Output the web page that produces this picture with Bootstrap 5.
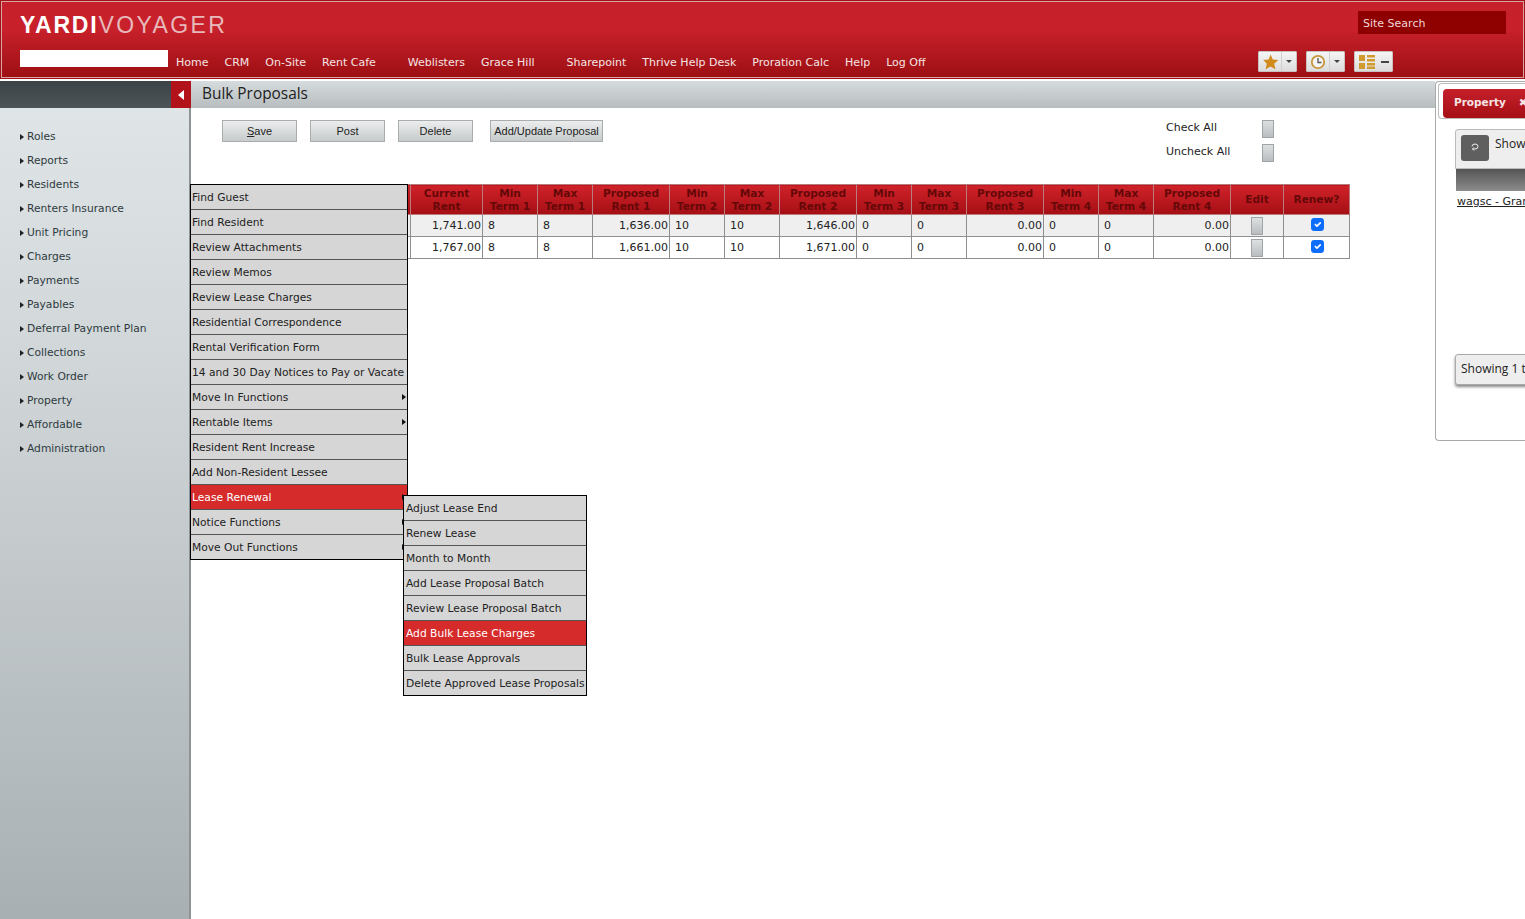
<!DOCTYPE html>
<html lang="en">
<head>
    <meta charset="UTF-8">
    <meta name="viewport" content="width=device-width, initial-scale=1">
    <title>Bulk Proposals</title>
    <link href="https://cdn.jsdelivr.net/npm/bootstrap@5.3.0/dist/css/bootstrap.min.css" rel="stylesheet">
    <style>
        html, body { height: 919px; overflow: hidden; }
        body { font-family: "DejaVu Sans", sans-serif; font-size: 11px; color: #222; background: #fff; position: relative; }

        .top-head { height: 79px; padding: 10px 18px 0 19px; background: linear-gradient(#c5202b 0%, #c9212c 35%, #9c0f12 100%); border: 1px solid #a01015; box-shadow: inset 0 0 0 1px #d8a6a6; }
        .brand-row { height: 39px; }
        .brand-text { font-family: "Liberation Sans", sans-serif; font-size: 23px; line-height: 28px; letter-spacing: 2.4px; color: #e7b9bb; }
        .brand-text b { color: #fff; letter-spacing: 1.8px; }
        .search-box { width: 148px; height: 23px; background: #8f0000; border: 0; border-radius: 0; color: #f3d5d5; font-size: 11px; padding: 1px 5px 0; box-shadow: none; }
        .search-box::placeholder { color: #f3d5d5; opacity: 1; }
        .search-box:focus { background: #8f0000; color: #f3d5d5; box-shadow: none; }
        .acct-box { width: 148px; height: 17px; background: #fff; margin-right: 8px; margin-bottom: 7px; }
        .nav-row { height: 23px; }
        .top-link { color: #f5e4e4; text-decoration: none; margin-right: 16px; margin-top: 4px; white-space: nowrap; }
        .top-tools { margin-right: 113px; margin-left: auto; gap: 9px; }
        .tool-btn { width: 39px; height: 21px; background: linear-gradient(#f5f5f5, #dcdcdc); border: 1px solid #c9c0c0; padding: 0; border-radius: 1px; }
        .tool-btn .part-a { width: 23px; height: 100%; border-right: 1px solid #cfcfcf; }
        .tool-btn .part-b { width: 14px; height: 100%; }
        .caret-mini { width: 0; height: 0; border-left: 3px solid transparent; border-right: 3px solid transparent; border-top: 3px solid #444; }
        .dash-mini { width: 8px; height: 2px; background: #444; }

        .work-area { height: 838px; margin-top: 2px; }
        .side-col { width: 191px; flex: none; background: linear-gradient(#e1e6e8 0%, #d0d6d8 35%, #a9b0b3 100%); box-shadow: inset -2px 0 0 #8e9496; }
        .side-head { height: 27px; background: linear-gradient(#3a4245, #4d5558); }
        .side-toggle { width: 20px; height: 27px; background: #b2121a; }
        .side-list { padding: 17px 0 0 20px; list-style: none; margin: 0; font-size: 10.7px; }
        .side-list li { height: 24px; line-height: 24px; color: #2e3a40; display: flex; align-items: center; white-space: nowrap; }
        .side-list li::before { content: ""; border-left: 4px solid #222; border-top: 3px solid transparent; border-bottom: 3px solid transparent; margin-right: 3px; }

        .main-col { flex: 1 1 auto; min-width: 0; }
        .title-strip { height: 27px; background: linear-gradient(#d6dbdd, #b7bdbf); font-family: "Open Sans", sans-serif; font-size: 15.4px; line-height: 26px; padding-left: 11px; color: #222; }
        .tool-strip { height: 76px; padding: 12px 161px 0 31px; }
        .grey-btn { height: 22px; width: 75px; padding: 0; font-family: "Liberation Sans", sans-serif; font-size: 11px; line-height: 20px; color: #222; background: linear-gradient(#eceeee, #c6cacb); border: 1px solid #a9adae; border-radius: 0; margin-right: 13px; white-space: nowrap; }
        .grey-btn.wide-btn { width: 113px; margin-left: 4px; }
        .check-pick { width: 108px; height: 24px; margin-top: -3px; }
        .check-pick + .check-pick { margin-top: 0; }
        .check-pick span { margin-bottom: 2px; }
        .mini-btn { width: 12px; height: 18px; background: linear-gradient(#dde0e1, #b9bdbf); border: 1px solid #a0a4a6; flex: none; }

        .rent-table { margin: 0 0 0 31px; width: 1127px; table-layout: fixed; border-collapse: collapse; }
        .rent-table th { background: linear-gradient(#d0222a, #a50f14); color: #650808; font-weight: 700; font-size: 10.6px; line-height: 13px; text-align: center; height: 30px; padding: 0; border: 1px solid #b87c7c; vertical-align: middle; white-space: nowrap; }
        .rent-table td { height: 22px; padding: 2px 1px 0 5px; font-size: 11px; border: 1px solid #8f8f8f; vertical-align: middle; }
        .rent-table tbody tr:nth-child(odd) td { background: #efefef; }
        .rent-table td.num { text-align: right; padding: 2px 1px 0 0; }
        .rent-table td.mid { text-align: center; padding: 0; }
        .rent-table .form-check-input { width: 13px; height: 13px; float: none; display: block; margin: 0 auto 2px; position: relative; left: 1px; }
        .rent-table .mini-btn { margin: 0 auto; }

        .dock-col { width: 90px; flex: none; height: 360px; overflow: hidden; border: 1px solid #aaa; border-right: 0; border-radius: 4px 0 0 4px; }
        .dock-head { height: 36px; margin: 1px 0 0 2px; padding: 5px 0 0 4px; border: 1px solid #bbb; border-right: 0; border-radius: 4px 0 0 4px; }
        .dock-tab { width: 100px; height: 29px; background: linear-gradient(#c5202b, #a50f14); border-radius: 4px 0 0 4px; color: #f5e4e4; font-weight: 700; font-size: 10.5px; line-height: 27px; padding-left: 11px; white-space: nowrap; }
        .dock-tab span { margin-left: 13px; }
        .show-box { width: 100px; height: 40px; margin: 10px 0 0 19px; background: #eee; border: 1px solid #bbb; border-radius: 3px 0 0 0; padding: 5px; font-family: "Open Sans", sans-serif; font-size: 12px; white-space: nowrap; }
        .spin-btn { width: 28px; height: 26px; background: #5f5f5f; border-radius: 3px; color: #eee; margin-right: 6px; flex: none; }
        .dark-bar { width: 100px; height: 22px; margin-left: 20px; background: linear-gradient(#555, #8b8b8b); }
        .dock-link { display: block; margin: 3px 0 0 21px; color: #222; white-space: nowrap; }
        .showing-box { width: 100px; height: 31px; margin: 143px 0 0 19px; background: #eee; border: 1px solid #aaa; border-radius: 3px 0 0 3px; box-shadow: 0 2px 3px #888; padding: 0 5px; line-height: 28px; font-family: "Open Sans", sans-serif; font-size: 12px; white-space: nowrap; }

        .fly-menu { display: block; padding: 0; margin: 0; border: 1px solid #000; border-radius: 0; background: #d6d6d6; min-width: 0; font-size: 10.7px; }
        .fly-main { left: 190px; top: 184px; width: 218px; z-index: 5; }
        .fly-sub { left: 403px; top: 495px; width: 184px; z-index: 6; }
        .fly-menu .dropdown-item { height: 25px; line-height: 26px; padding: 0 1px; color: #222; border-bottom: 1px solid #555; position: relative; white-space: nowrap; }
        .fly-sub .dropdown-item { padding-left: 2px; }
        .fly-menu li:last-child .dropdown-item { border-bottom: 0; height: 24px; }
        .fly-menu .dropdown-item.active { background: #d52b2b; color: #fff; }
        .fly-menu .has-kids::after { content: ""; position: absolute; right: 1px; top: 9px; border-left: 4px solid #111; border-top: 3px solid transparent; border-bottom: 3px solid transparent; }
    </style>
</head>
<body>

<header class="top-head">
    <div class="brand-row d-flex justify-content-between align-items-start">
        <div class="brand-text"><b>YARDI</b>VOYAGER</div>
        <input class="form-control search-box" type="text" placeholder="Site Search">
    </div>
    <div class="nav-row d-flex align-items-center">
        <div class="acct-box"></div>
        <a class="top-link" href="#">Home</a>
        <a class="top-link" href="#">CRM</a>
        <a class="top-link" href="#">On-Site</a>
        <a class="top-link" href="#">Rent Cafe</a>
        <a class="top-link ms-3" href="#">Weblisters</a>
        <a class="top-link" href="#">Grace Hill</a>
        <a class="top-link ms-3" href="#">Sharepoint</a>
        <a class="top-link" href="#">Thrive Help Desk</a>
        <a class="top-link" href="#">Proration Calc</a>
        <a class="top-link" href="#">Help</a>
        <a class="top-link" href="#">Log Off</a>
        <div class="top-tools d-flex">
            <div class="tool-btn d-flex">
                <div class="part-a d-flex align-items-center justify-content-center">
                    <svg width="17" height="16" viewBox="0 0 17 16"><path d="M8.5 0.5l2.3 5 5.5.6-4.1 3.7 1.2 5.4-4.9-2.8-4.9 2.8 1.2-5.4L1.2 6.100l5.500-.6z" fill="#d28a1a"/></svg>
                </div>
                <div class="part-b d-flex align-items-center justify-content-center"><div class="caret-mini"></div></div>
            </div>
            <div class="tool-btn d-flex">
                <div class="part-a d-flex align-items-center justify-content-center">
                    <svg width="16" height="16" viewBox="0 0 16 16"><circle cx="8" cy="8" r="6.200" fill="#f4f4f4" stroke="#c8963c" stroke-width="1.800"/><path d="M8 4v4.500h3.500" fill="none" stroke="#555" stroke-width="1.300"/></svg>
                </div>
                <div class="part-b d-flex align-items-center justify-content-center"><div class="caret-mini"></div></div>
            </div>
            <div class="tool-btn d-flex">
                <div class="part-a d-flex align-items-center justify-content-center border-0">
                    <svg width="16" height="14" viewBox="0 0 16 14"><g fill="#d19a2e"><rect x="0" y="0" width="6" height="6"/><rect x="0" y="8" width="6" height="6"/><rect x="8" y="0" width="8" height="2.500"/><rect x="8" y="4" width="8" height="2.500"/><rect x="8" y="8" width="8" height="2.500"/><rect x="8" y="11.500" width="8" height="2.500"/></g></svg>
                </div>
                <div class="part-b d-flex align-items-center justify-content-center"><div class="dash-mini"></div></div>
            </div>
        </div>
    </div>
</header>

<div class="work-area d-flex">
    <aside class="side-col">
        <div class="side-head d-flex justify-content-end">
            <div class="side-toggle d-flex align-items-center justify-content-center">
                <svg width="6" height="10" viewBox="0 0 6 10"><path d="M6 0v10L0 5z" fill="#fff"/></svg>
            </div>
        </div>
        <ul class="side-list">
            <li>Roles</li>
            <li>Reports</li>
            <li>Residents</li>
            <li>Renters Insurance</li>
            <li>Unit Pricing</li>
            <li>Charges</li>
            <li>Payments</li>
            <li>Payables</li>
            <li>Deferral Payment Plan</li>
            <li>Collections</li>
            <li>Work Order</li>
            <li>Property</li>
            <li>Affordable</li>
            <li>Administration</li>
        </ul>
    </aside>

    <main class="main-col">
        <div class="title-strip">Bulk Proposals</div>
        <div class="tool-strip d-flex align-items-start">
            <button class="btn grey-btn" type="button"><u>S</u>ave</button>
            <button class="btn grey-btn" type="button">Post</button>
            <button class="btn grey-btn" type="button">Delete</button>
            <button class="btn grey-btn wide-btn" type="button">Add/Update Proposal</button>
            <div class="ms-auto">
                <div class="check-pick d-flex align-items-center justify-content-between"><span>Check All</span><div class="mini-btn"></div></div>
                <div class="check-pick d-flex align-items-center justify-content-between"><span>Uncheck All</span><div class="mini-btn"></div></div>
            </div>
        </div>
        <table class="rent-table">
            <colgroup>
                <col width="188"><col width="72"><col width="55"><col width="55"><col width="77"><col width="55"><col width="55"><col width="77"><col width="55"><col width="55"><col width="77"><col width="55"><col width="55"><col width="77"><col width="53"><col width="66">
            </colgroup>
            <thead>
                <tr>
                    <th>Resident</th>
                    <th>Current<br>Rent</th>
                    <th>Min<br>Term 1</th><th>Max<br>Term 1</th><th>Proposed<br>Rent 1</th>
                    <th>Min<br>Term 2</th><th>Max<br>Term 2</th><th>Proposed<br>Rent 2</th>
                    <th>Min<br>Term 3</th><th>Max<br>Term 3</th><th>Proposed<br>Rent 3</th>
                    <th>Min<br>Term 4</th><th>Max<br>Term 4</th><th>Proposed<br>Rent 4</th>
                    <th>Edit</th><th>Renew?</th>
                </tr>
            </thead>
            <tbody>
                <tr>
                    <td></td><td class="num">1,741.00</td>
                    <td>8</td><td>8</td><td class="num">1,636.00</td>
                    <td>10</td><td>10</td><td class="num">1,646.00</td>
                    <td>0</td><td>0</td><td class="num">0.00</td>
                    <td>0</td><td>0</td><td class="num">0.00</td>
                    <td class="mid"><div class="mini-btn"></div></td>
                    <td class="mid"><input class="form-check-input" type="checkbox" checked></td>
                </tr>
                <tr>
                    <td></td><td class="num">1,767.00</td>
                    <td>8</td><td>8</td><td class="num">1,661.00</td>
                    <td>10</td><td>10</td><td class="num">1,671.00</td>
                    <td>0</td><td>0</td><td class="num">0.00</td>
                    <td>0</td><td>0</td><td class="num">0.00</td>
                    <td class="mid"><div class="mini-btn"></div></td>
                    <td class="mid"><input class="form-check-input" type="checkbox" checked></td>
                </tr>
            </tbody>
        </table>
    </main>

    <aside class="dock-col">
        <div class="dock-head">
            <div class="dock-tab">Property<span>&#10006;</span></div>
        </div>
        <div class="show-box d-flex">
            <div class="spin-btn d-flex align-items-center justify-content-center">
                <svg width="10" height="10" viewBox="0 0 10 10"><path d="M2 3.500a3 2.500 0 0 1 6 0 3 2.500 0 0 1-3 2.500H2.500M4 4.500L2.500 6 4 7.500" fill="none" stroke="#eee" stroke-width="1"/></svg>
            </div>
            Show
        </div>
        <div class="dark-bar"></div>
        <a class="dock-link" href="#">wagsc - Grand</a>
        <div class="showing-box">Showing 1 to</div>
    </aside>
</div>

<ul class="dropdown-menu fly-menu fly-main position-absolute">
    <li><a class="dropdown-item" href="#">Find Guest</a></li>
    <li><a class="dropdown-item" href="#">Find Resident</a></li>
    <li><a class="dropdown-item" href="#">Review Attachments</a></li>
    <li><a class="dropdown-item" href="#">Review Memos</a></li>
    <li><a class="dropdown-item" href="#">Review Lease Charges</a></li>
    <li><a class="dropdown-item" href="#">Residential Correspondence</a></li>
    <li><a class="dropdown-item" href="#">Rental Verification Form</a></li>
    <li><a class="dropdown-item" href="#">14 and 30 Day Notices to Pay or Vacate</a></li>
    <li><a class="dropdown-item has-kids" href="#">Move In Functions</a></li>
    <li><a class="dropdown-item has-kids" href="#">Rentable Items</a></li>
    <li><a class="dropdown-item" href="#">Resident Rent Increase</a></li>
    <li><a class="dropdown-item" href="#">Add Non-Resident Lessee</a></li>
    <li><a class="dropdown-item active has-kids" href="#">Lease Renewal</a></li>
    <li><a class="dropdown-item has-kids" href="#">Notice Functions</a></li>
    <li><a class="dropdown-item has-kids" href="#">Move Out Functions</a></li>
</ul>

<ul class="dropdown-menu fly-menu fly-sub position-absolute">
    <li><a class="dropdown-item" href="#">Adjust Lease End</a></li>
    <li><a class="dropdown-item" href="#">Renew Lease</a></li>
    <li><a class="dropdown-item" href="#">Month to Month</a></li>
    <li><a class="dropdown-item" href="#">Add Lease Proposal Batch</a></li>
    <li><a class="dropdown-item" href="#">Review Lease Proposal Batch</a></li>
    <li><a class="dropdown-item active" href="#">Add Bulk Lease Charges</a></li>
    <li><a class="dropdown-item" href="#">Bulk Lease Approvals</a></li>
    <li><a class="dropdown-item" href="#">Delete Approved Lease Proposals</a></li>
</ul>

<script src="https://cdn.jsdelivr.net/npm/bootstrap@5.3.0/dist/js/bootstrap.bundle.min.js"></script>
</body>
</html>
